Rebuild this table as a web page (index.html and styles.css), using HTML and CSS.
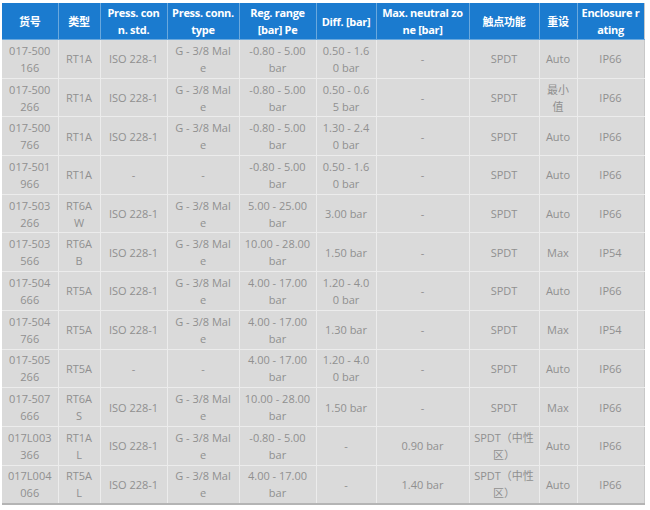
FILE: index.html
```html
<!DOCTYPE html>
<html lang="zh">
<head>
<meta charset="utf-8">
<link rel="stylesheet" href="styles.css">
</head>
<body>
<table class="spec">
<colgroup>
<col class="c1"><col class="c2"><col class="c3"><col class="c4"><col class="c5"><col class="c6"><col class="c7"><col class="c8"><col class="c9"><col class="c10">
</colgroup>
<thead>
<tr><th>货号</th><th>类型</th><th>Press. conn. std.</th><th>Press. conn. type</th><th>Reg. range [bar] Pe</th><th>Diff. [bar]</th><th>Max. neutral zone [bar]</th><th>触点功能</th><th>重设</th><th>Enclosure rating</th></tr>
</thead>
<tbody>
<tr><td>017-500166</td><td>RT1A</td><td>ISO 228-1</td><td>G - 3/8 Male</td><td>-0.80 - 5.00<br>bar</td><td>0.50 - 1.60 bar</td><td>-</td><td>SPDT</td><td>Auto</td><td>IP66</td></tr>
<tr><td>017-500266</td><td>RT1A</td><td>ISO 228-1</td><td>G - 3/8 Male</td><td>-0.80 - 5.00<br>bar</td><td>0.50 - 0.65 bar</td><td>-</td><td>SPDT</td><td>最小值</td><td>IP66</td></tr>
<tr><td>017-500766</td><td>RT1A</td><td>ISO 228-1</td><td>G - 3/8 Male</td><td>-0.80 - 5.00<br>bar</td><td>1.30 - 2.40 bar</td><td>-</td><td>SPDT</td><td>Auto</td><td>IP66</td></tr>
<tr><td>017-501966</td><td>RT1A</td><td>-</td><td>-</td><td>-0.80 - 5.00<br>bar</td><td>0.50 - 1.60 bar</td><td>-</td><td>SPDT</td><td>Auto</td><td>IP66</td></tr>
<tr><td>017-503266</td><td>RT6AW</td><td>ISO 228-1</td><td>G - 3/8 Male</td><td>5.00 - 25.00<br>bar</td><td>3.00 bar</td><td>-</td><td>SPDT</td><td>Auto</td><td>IP66</td></tr>
<tr><td>017-503566</td><td>RT6AB</td><td>ISO 228-1</td><td>G - 3/8 Male</td><td>10.00 - 28.00<br>bar</td><td>1.50 bar</td><td>-</td><td>SPDT</td><td>Max</td><td>IP54</td></tr>
<tr><td>017-504666</td><td>RT5A</td><td>ISO 228-1</td><td>G - 3/8 Male</td><td>4.00 - 17.00<br>bar</td><td>1.20 - 4.00 bar</td><td>-</td><td>SPDT</td><td>Auto</td><td>IP66</td></tr>
<tr><td>017-504766</td><td>RT5A</td><td>ISO 228-1</td><td>G - 3/8 Male</td><td>4.00 - 17.00<br>bar</td><td>1.30 bar</td><td>-</td><td>SPDT</td><td>Max</td><td>IP54</td></tr>
<tr><td>017-505266</td><td>RT5A</td><td>-</td><td>-</td><td>4.00 - 17.00<br>bar</td><td>1.20 - 4.00 bar</td><td>-</td><td>SPDT</td><td>Auto</td><td>IP66</td></tr>
<tr><td>017-507666</td><td>RT6AS</td><td>ISO 228-1</td><td>G - 3/8 Male</td><td>10.00 - 28.00<br>bar</td><td>1.50 bar</td><td>-</td><td>SPDT</td><td>Max</td><td>IP66</td></tr>
<tr><td>017L003366</td><td>RT1AL</td><td>ISO 228-1</td><td>G - 3/8 Male</td><td>-0.80 - 5.00<br>bar</td><td>-</td><td>0.90 bar</td><td>SPDT（中性区）</td><td>Auto</td><td>IP66</td></tr>
<tr><td>017L004066</td><td>RT5AL</td><td>ISO 228-1</td><td>G - 3/8 Male</td><td>4.00 - 17.00<br>bar</td><td>-</td><td>1.40 bar</td><td>SPDT（中性区）</td><td>Auto</td><td>IP66</td></tr>
</tbody>
</table>
</body>
</html>
```
FILE: styles.css
```css
html, body {
  margin: 0;
  padding: 0;
  background: #ffffff;
}
.spec {
  margin: 3px 0 0 2px;
  width: 642px;
  table-layout: fixed;
  border-collapse: collapse;
  font-family: "Open Sans", "Noto Sans CJK SC", sans-serif;
  font-size: 11px;
  line-height: 17px;
  border-bottom: 2px solid #b4b4b4;
}
.c1 { width: 56px; }
.c2 { width: 42px; }
.c3 { width: 67px; }
.c4 { width: 72px; }
.c5 { width: 77px; }
.c6 { width: 60px; }
.c7 { width: 93px; }
.c8 { width: 70px; }
.c9 { width: 38px; }
.c10 { width: 67px; }
.spec th, .spec td {
  text-align: center;
  vertical-align: middle;
  word-break: break-all;
  padding: 1px 5px;
  border: 1px solid #ececec;
}
.spec th {
  background: #1b7bcf;
  color: #ffffff;
  font-weight: 700;
  letter-spacing: -0.3px;
  height: 32px;
  border-color: #6aa8dd;
  border-top: none;
}
.spec th:nth-child(3) { padding: 1px 6px; }
.spec th:nth-child(4) { padding: 1px 4px; }
.spec th:nth-child(5) { padding: 1px 6px; }
.spec th:nth-child(6) { padding: 1px 3px; }
.spec th:nth-child(7) { padding: 1px 5px; }
.spec th:nth-child(10) { padding: 1px 3px; }
.spec td {
  background: #dadada;
  color: #909090;
  height: 35.7px;
}
.spec td:nth-child(8) { padding: 1px 2px; }
.spec tr > :first-child { border-left: none; }
.spec tr > :last-child { border-right: 1px solid #c8c8c8; }
```
